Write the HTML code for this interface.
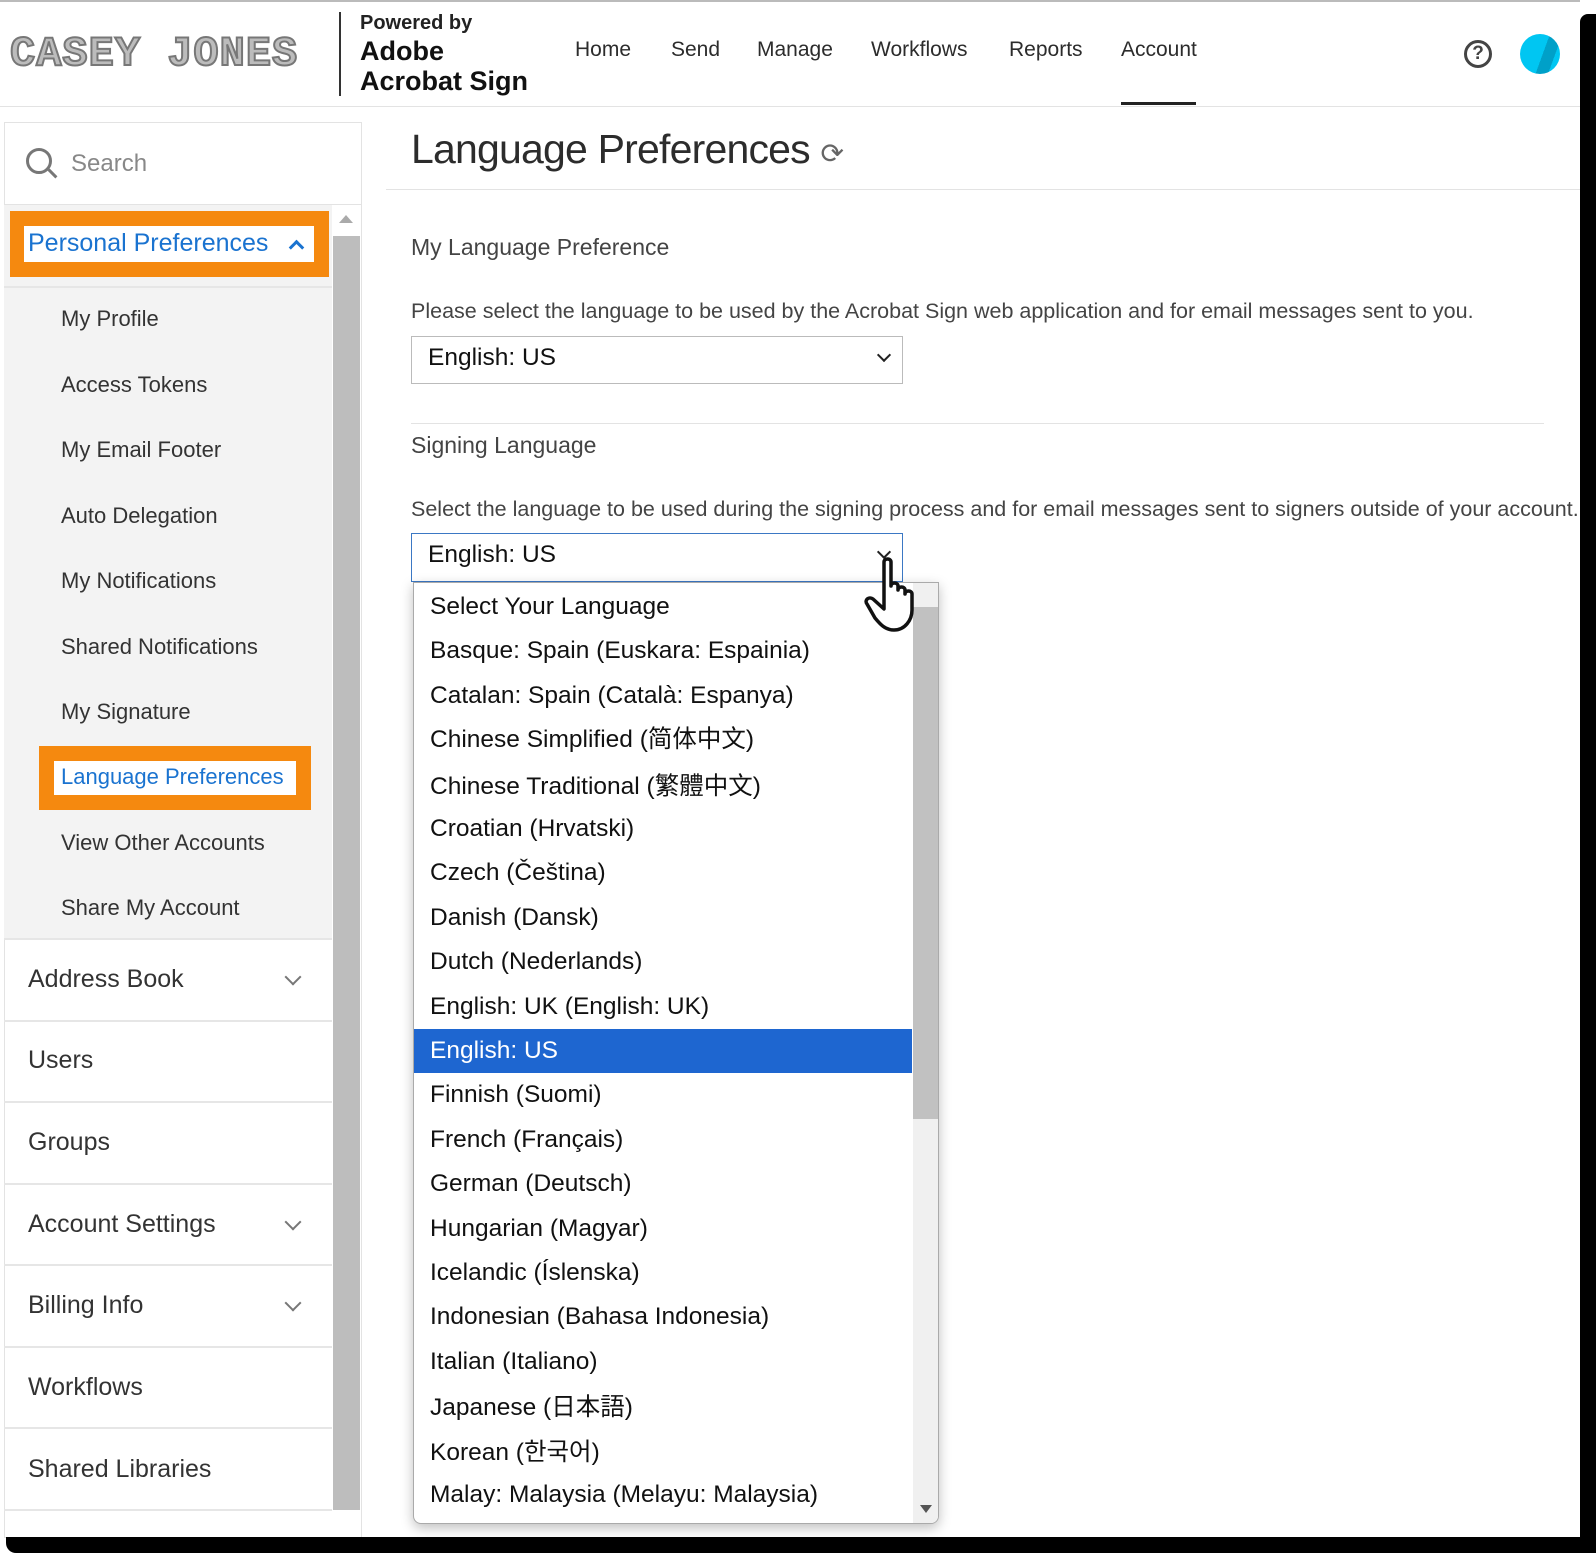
<!DOCTYPE html>
<html><head><meta charset="utf-8"><style>
*{margin:0;padding:0;box-sizing:border-box}
body{width:1596px;height:1553px;position:relative;overflow:hidden;background:#fff;font-family:"Liberation Sans","Noto Sans CJK SC",sans-serif;color:#2c2c2c}
.a{position:absolute}
.nav{top:38px;font-size:21px;color:#2c2c2c}
.sub{left:61px;font-size:22px;color:#333}
.sec{left:28px;font-size:25px;color:#333}
.line{left:4px;width:328px;height:2px;background:#e6e6e6}
.chev{position:absolute;left:287px;width:12px;height:12px;border-right:2.5px solid #777;border-bottom:2.5px solid #777;transform:rotate(45deg)}
.opt{position:absolute;left:0;width:100%;height:44.4px;line-height:44.4px;padding-left:16px;font-size:24.5px;color:#111;font-family:"Liberation Sans","Noto Sans CJK SC",sans-serif}
</style></head><body>
<div class="a" style="left:0;top:0;width:1580px;height:2px;background:#bbb"></div>
<div class="a" style="left:10px;top:30px;font-size:42px;font-weight:bold;color:#bcbcbc;letter-spacing:1px;-webkit-text-stroke:2px #777;font-family:'Liberation Mono',monospace">CASEY&nbsp;JONES</div>
<div class="a" style="left:339px;top:12px;width:2px;height:84px;background:#333"></div>
<div class="a" style="left:360px;top:12px;font-size:20px;font-weight:bold;color:#222">Powered by</div>
<div class="a" style="left:360px;top:36px;font-size:27px;font-weight:bold;color:#111;line-height:30px">Adobe<br>Acrobat Sign</div>
<div class="a nav" style="left:575px">Home</div>
<div class="a nav" style="left:671px">Send</div>
<div class="a nav" style="left:757px">Manage</div>
<div class="a nav" style="left:871px">Workflows</div>
<div class="a nav" style="left:1009px">Reports</div>
<div class="a nav" style="left:1121px">Account</div>
<div class="a" style="left:1121px;top:102px;width:75px;height:3px;background:#222"></div>
<div class="a" style="left:1464px;top:40px;width:28px;height:28px;border:3px solid #444;border-radius:50%;text-align:center;font-size:19px;font-weight:bold;line-height:22px;color:#444">?</div>
<div class="a" style="left:1520px;top:34px;width:40px;height:40px;border-radius:50%;background:linear-gradient(110deg,#00c6f2 55%,#00a0c8 55%,#00a0c8 78%,#00c6f2 78%)"></div>
<div class="a" style="left:0;top:106px;width:1580px;height:1px;background:#e3e3e3"></div>
<div class="a" style="left:4px;top:122px;width:358px;height:1416px;border:1px solid #e3e3e3;background:#fff"></div>
<div class="a" style="left:26px;top:148px;width:26px;height:26px;border:3px solid #777;border-radius:50%"></div>
<div class="a" style="left:47px;top:172px;width:11px;height:3px;background:#777;transform:rotate(45deg)"></div>
<div class="a" style="left:71px;top:150px;font-size:24px;color:#888">Search</div>
<div class="a" style="left:4px;top:204px;width:358px;height:1px;background:#e3e3e3"></div>
<div class="a" style="left:4px;top:205px;width:328px;height:734px;background:#f3f3f3"></div>
<div class="a" style="left:333px;top:236px;width:27px;height:1274px;background:#bdbdbd"></div>
<div class="a" style="left:339px;top:215px;width:0;height:0;border-left:7px solid transparent;border-right:7px solid transparent;border-bottom:8px solid #aaa"></div>
<div class="a" style="left:10px;top:211px;width:319px;height:66px;background:#f5890f"></div>
<div class="a" style="left:24px;top:226px;width:290px;height:36px;background:#fff"></div>
<div class="a" style="left:28px;top:229px;font-size:25px;color:#1a73d0">Personal Preferences</div>
<div class="a" style="left:291px;top:242px;width:11px;height:11px;border-left:3px solid #1a73d0;border-top:3px solid #1a73d0;transform:rotate(45deg)"></div>
<div class="a line" style="top:286px"></div>
<div class="a sub" style="top:306px">My Profile</div>
<div class="a sub" style="top:372px">Access Tokens</div>
<div class="a sub" style="top:437px">My Email Footer</div>
<div class="a sub" style="top:503px">Auto Delegation</div>
<div class="a sub" style="top:568px">My Notifications</div>
<div class="a sub" style="top:634px">Shared Notifications</div>
<div class="a sub" style="top:699px">My Signature</div>
<div class="a" style="left:39px;top:746px;width:272px;height:64px;background:#f5890f"></div>
<div class="a" style="left:54px;top:761px;width:242px;height:34px;background:#fff"></div>
<div class="a sub" style="top:764px;color:#1a73d0">Language Preferences</div>
<div class="a sub" style="top:830px">View Other Accounts</div>
<div class="a sub" style="top:895px">Share My Account</div>
<div class="a line" style="top:938px"></div>
<div class="a sec" style="top:965px">Address Book</div><div class="chev" style="top:971px"></div>
<div class="a line" style="top:1020px"></div>
<div class="a sec" style="top:1046px">Users</div>
<div class="a line" style="top:1101px"></div>
<div class="a sec" style="top:1128px">Groups</div>
<div class="a line" style="top:1183px"></div>
<div class="a sec" style="top:1210px">Account Settings</div><div class="chev" style="top:1216px"></div>
<div class="a line" style="top:1264px"></div>
<div class="a sec" style="top:1291px">Billing Info</div><div class="chev" style="top:1297px"></div>
<div class="a line" style="top:1346px"></div>
<div class="a sec" style="top:1373px">Workflows</div>
<div class="a line" style="top:1427px"></div>
<div class="a sec" style="top:1455px">Shared Libraries</div>
<div class="a line" style="top:1509px"></div>
<div class="a" style="left:411px;top:126px;font-size:41px;letter-spacing:-0.8px;color:#2c2c2c">Language Preferences <span style="font-size:28px;color:#666">⟳</span></div>
<div class="a" style="left:386px;top:189px;width:1194px;height:1px;background:#e3e3e3"></div>
<div class="a" style="left:411px;top:234px;font-size:23px;color:#444">My Language Preference</div>
<div class="a" style="left:411px;top:299px;font-size:21.5px;color:#444">Please select the language to be used by the Acrobat Sign web application and for email messages sent to you.</div>
<div class="a" style="left:411px;top:336px;width:492px;height:48px;border:1px solid #bbb"></div>
<div class="a" style="left:428px;top:344px;font-size:24.5px;color:#111">English: US</div>
<div class="a" style="left:879px;top:350px;width:10px;height:10px;border-right:2px solid #222;border-bottom:2px solid #222;transform:rotate(45deg)"></div>
<div class="a" style="left:411px;top:423px;width:1133px;height:1px;background:#e3e3e3"></div>
<div class="a" style="left:411px;top:432px;font-size:23px;color:#444">Signing Language</div>
<div class="a" style="left:411px;top:497px;font-size:21.5px;color:#444">Select the language to be used during the signing process and for email messages sent to signers outside of your account.</div>
<div class="a" style="left:411px;top:533px;width:492px;height:49px;border:1px solid #3b78c4"></div>
<div class="a" style="left:428px;top:541px;font-size:24.5px;color:#111">English: US</div>
<div class="a" style="left:879px;top:547px;width:10px;height:10px;border-right:2px solid #222;border-bottom:2px solid #222;transform:rotate(45deg)"></div>
<div class="a" style="left:413px;top:582px;width:526px;height:942px;background:#fff;border:1px solid #aaa;border-radius:0 0 8px 8px;box-shadow:0 4px 12px rgba(0,0,0,.25);overflow:hidden">
<div class="a" style="left:499px;top:0;width:26px;height:940px;background:#f0f0f0"></div>
<div class="a" style="left:499px;top:24px;width:26px;height:512px;background:#c1c1c1"></div>
<div class="a" style="left:506px;top:922px;border-left:6px solid transparent;border-right:6px solid transparent;border-top:8px solid #555"></div>
<div class="a" style="left:0;top:2px;width:498px;height:940px">
<div class="opt" style="top:0">Select Your Language</div>
<div class="opt" style="top:44.4px">Basque: Spain (Euskara: Espainia)</div>
<div class="opt" style="top:88.8px">Catalan: Spain (Català: Espanya)</div>
<div class="opt" style="top:133.2px">Chinese Simplified (简体中文)</div>
<div class="opt" style="top:177.6px">Chinese Traditional (<span style="font-family:'Noto Sans CJK TC',sans-serif">繁體中文</span>)</div>
<div class="opt" style="top:222px">Croatian (Hrvatski)</div>
<div class="opt" style="top:266.4px">Czech (Čeština)</div>
<div class="opt" style="top:310.8px">Danish (Dansk)</div>
<div class="opt" style="top:355.2px">Dutch (Nederlands)</div>
<div class="opt" style="top:399.6px">English: UK (English: UK)</div>
<div class="opt" style="top:444px;background:#1e66d0;color:#fff">English: US</div>
<div class="opt" style="top:488.4px">Finnish (Suomi)</div>
<div class="opt" style="top:532.8px">French (Français)</div>
<div class="opt" style="top:577.2px">German (Deutsch)</div>
<div class="opt" style="top:621.6px">Hungarian (Magyar)</div>
<div class="opt" style="top:666px">Icelandic (Íslenska)</div>
<div class="opt" style="top:710.4px">Indonesian (Bahasa Indonesia)</div>
<div class="opt" style="top:754.8px">Italian (Italiano)</div>
<div class="opt" style="top:799.2px">Japanese (<span style="font-family:'Noto Sans CJK JP',sans-serif">日本語</span>)</div>
<div class="opt" style="top:843.6px">Korean (<span style="font-family:'Noto Sans CJK KR',sans-serif">한국어</span>)</div>
<div class="opt" style="top:888px">Malay: Malaysia (Melayu: Malaysia)</div>
</div></div>
<svg class="a" style="left:862px;top:556px" width="66" height="80" viewBox="0 0 66 80"><path d="M22 6c0-4 7-4 7 0v24c0-4 7-4 7 0v4c0-4 7-4 7 0v4c0-4 7-4 7 0v16c0 10-7 20-18 20c-9 0-14-6-19-12L5 48c-3-4 2-8 6-5l11 10z" fill="#fff" stroke="#111" stroke-width="3.5" stroke-linejoin="round"/></svg>
<div class="a" style="left:1580px;top:14px;width:16px;height:1539px;background:#000;border-radius:8px 0 0 0"></div>
<div class="a" style="left:6px;top:1537px;width:1590px;height:16px;background:#000;border-radius:0 0 0 10px"></div>
</body></html>
